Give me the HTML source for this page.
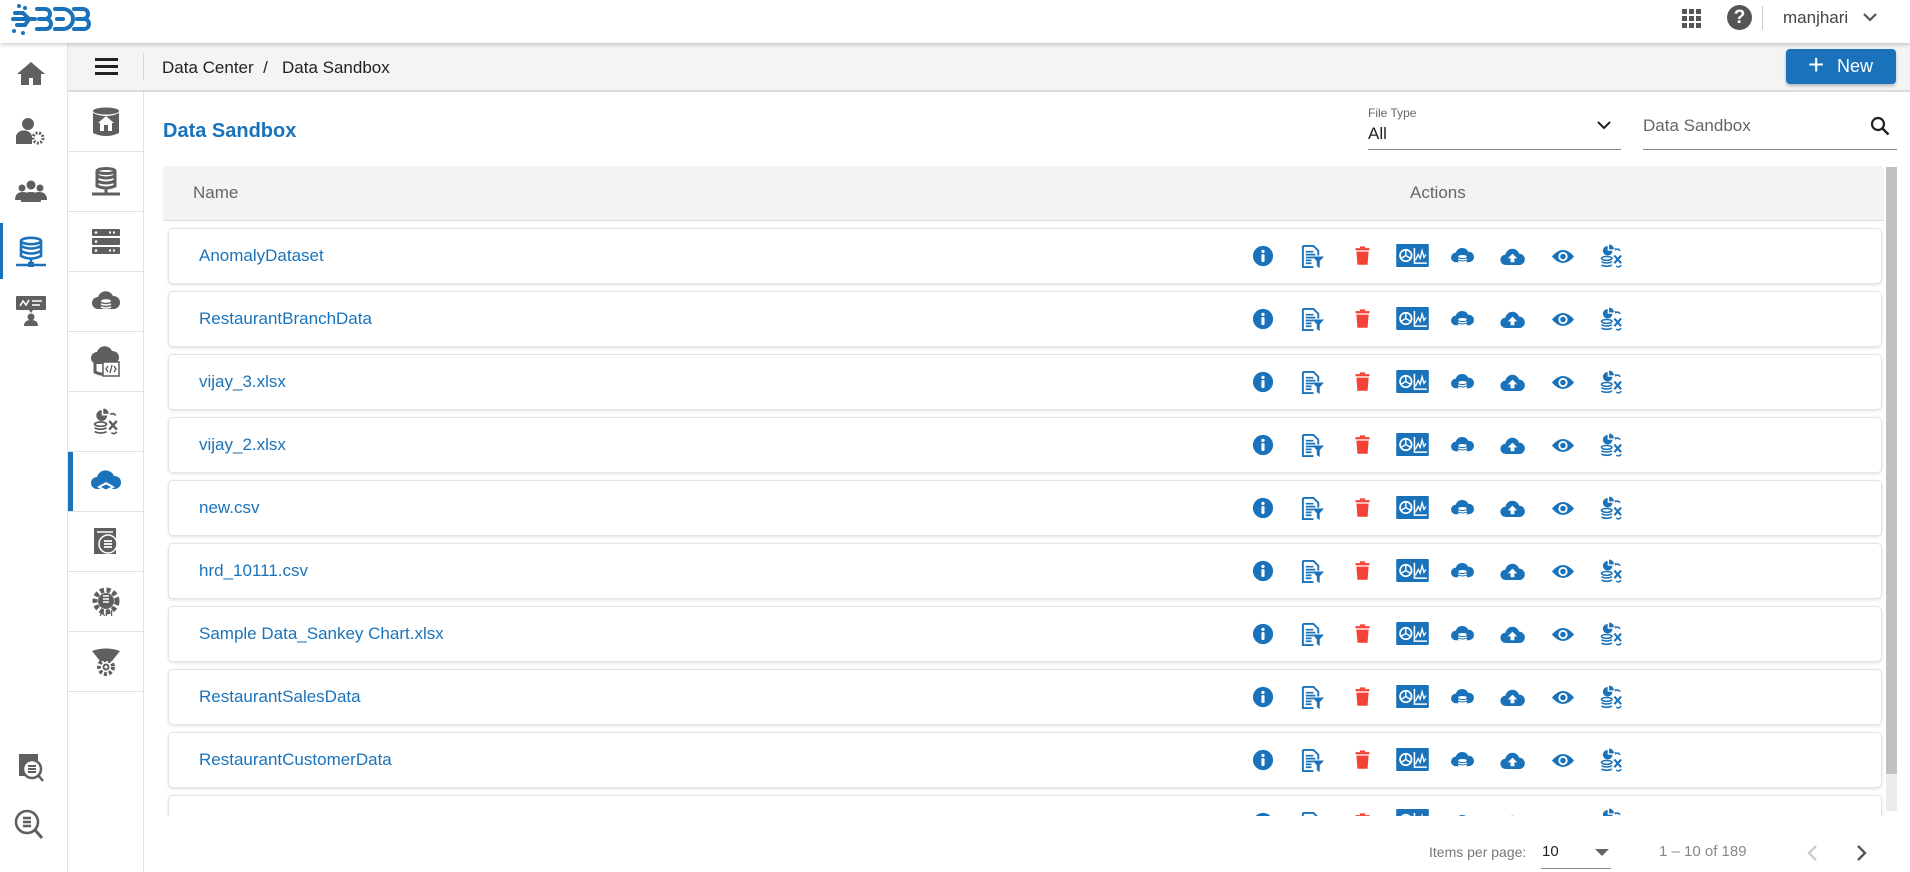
<!DOCTYPE html>
<html><head><meta charset="utf-8">
<style>
*{box-sizing:border-box;margin:0;padding:0}
body{width:1910px;height:872px;overflow:hidden;background:#fff;font-family:"Liberation Sans",sans-serif;position:relative;color:#222}
.abs{position:absolute}
#hdr{left:0;top:0;width:1910px;height:43px;background:#fff;box-shadow:0 2px 4px rgba(0,0,0,.18);z-index:5}
#rail{left:0;top:43px;width:68px;height:829px;background:#fff;border-right:1px solid #e2e2e2}
#bc{left:68px;top:43px;width:1842px;height:49px;background:#f4f4f4;border-bottom:2px solid #dcdcdc}
#rail2{left:68px;top:92px;width:76px;height:780px;background:#fff;border-right:1px solid #e2e2e2}
.r2{position:absolute;left:0;width:75px;height:60px;border-bottom:1px solid #e2e2e2;display:flex;align-items:center;justify-content:center}
.row{position:absolute;left:168px;width:1714px;height:56px;background:#fff;border:1px solid #e4e4e4;border-radius:5px;box-shadow:0 1px 3px rgba(0,0,0,.12)}
.row .t{position:absolute;left:30px;top:17px;font-size:17px;color:#1a73ba}
.ia{position:absolute}
</style></head><body>
<svg width="0" height="0" style="position:absolute">
<defs>
<symbol id="info" viewBox="0 0 24 24"><circle cx="12" cy="12" r="11" fill="#1a73ba"/><circle cx="12" cy="7" r="1.8" fill="#fff"/><rect x="10.3" y="10" width="3.4" height="8.5" rx="1" fill="#fff"/></symbol>
<symbol id="doc" viewBox="0 0 26 26"><path d="M3 2h11l5 5v5" fill="none" stroke="#1a73ba" stroke-width="2"/><path d="M3 2v22h11" fill="none" stroke="#1a73ba" stroke-width="2"/><path d="M6 8h8M6 11h10M6 14h8M6 17h6M6 20h6" stroke="#1a73ba" stroke-width="1.8"/><path d="M13 13h12l-4.5 5v7l-3-2v-5z" fill="#1a73ba"/></symbol>
<symbol id="trash" viewBox="0 0 24 24"><rect x="4" y="3" width="16" height="2.5" fill="#f44336"/><rect x="9" y="1" width="6" height="2" fill="#f44336"/><path d="M5 7h14l-1.2 15H6.2z" fill="#f44336"/></symbol>
<symbol id="chart" viewBox="0 0 34 24"><rect width="34" height="24" rx="1" fill="#1a73ba"/><circle cx="10" cy="12" r="6" fill="none" stroke="#fff" stroke-width="1.8"/><path d="M10 6v6l5 3M10 12l-5 3" stroke="#fff" stroke-width="1.5" fill="none"/><path d="M19 4v16h13" stroke="#fff" stroke-width="1.6" fill="none"/><path d="M20 17l3-6 2 4 2-8 2 7 2-3" stroke="#fff" stroke-width="1.4" fill="none"/></symbol>
<symbol id="cdb" viewBox="0 0 26 22"><path d="M6 17a5 5 0 0 1 0-10 7 7 0 0 1 13-1 5.5 5.5 0 0 1 1 11z" fill="#1a73ba"/><ellipse cx="13" cy="11" rx="4.5" ry="1.6" fill="#fff"/><path d="M8.5 13.5q4.5 2 9 0M8.5 16q4.5 2 9 0M8.5 18.5q4.5 2 9 0" stroke="#fff" stroke-width="1.4" fill="none"/></symbol>
<symbol id="up" viewBox="0 0 26 20"><path d="M6 19a5.5 5.5 0 0 1-.5-11 7.5 7.5 0 0 1 14.5-1 6 6 0 0 1 0 12z" fill="#1a73ba"/><path d="M13 7l-5 5h3v4h4v-4h3z" fill="#fff"/></symbol>
<symbol id="eye" viewBox="0 0 26 18"><path d="M1 9Q13-5 25 9 13 23 1 9z" fill="#1a73ba"/><circle cx="13" cy="9" r="5" fill="#fff"/><circle cx="13" cy="9" r="3" fill="#1a73ba"/></symbol>
<symbol id="pie" viewBox="0 0 24 26"><path d="M8 2a5 5 0 1 0 5 5H8z" fill="#1a73ba"/><path d="M9.5 0.5v5h5a5 5 0 0 0-5-5z" fill="#1a73ba"/><ellipse cx="7" cy="15" rx="5.5" ry="2" fill="none" stroke="#1a73ba" stroke-width="1.6"/><path d="M1.5 18.5q5.5 2.5 11 0M1.5 22q5.5 2.5 11 0" stroke="#1a73ba" stroke-width="1.6" fill="none"/><path d="M15 12l7 8M22 12l-7 8" stroke="#1a73ba" stroke-width="2.2"/><path d="M16 6q3-2 5 1M17 23q3 2 5-1" stroke="#1a73ba" stroke-width="1.6" fill="none"/><path d="M15 4l1 3 2-2z" fill="#1a73ba"/></symbol>
</defs></svg>

<div id="hdr" class="abs">
<svg class="abs" style="left:11px;top:3px" width="84" height="33" viewBox="0 0 84 33"><g fill="none" stroke="#1a73ba" stroke-width="4" stroke-linecap="round"><path d="M26 6h8a5 5 0 0 1 0 10h-6M28 16h7a5 5 0 0 1 0 10h-9"/><path d="M44 6h8a10 10 0 0 1 0 20h-8M46 16h6"/><path d="M63 6h9a5 5 0 0 1 0 10h-6M66 16h7a5 5 0 0 1 0 10h-10"/><path d="M4 10h8l6 6h6M2 16h16M6 22h8l4-6"/></g><g fill="#1a73ba"><circle cx="8" cy="3" r="2"/><circle cx="14" cy="5" r="2"/><circle cx="3" cy="28" r="2"/><circle cx="12" cy="30" r="2"/></g></svg>
<svg class="abs" style="left:1682px;top:9px" width="20" height="20"><g fill="#555"><rect x="0" y="0" width="5" height="5"/><rect x="7" y="0" width="5" height="5"/><rect x="14" y="0" width="5" height="5"/><rect x="0" y="7" width="5" height="5"/><rect x="7" y="7" width="5" height="5"/><rect x="14" y="7" width="5" height="5"/><rect x="0" y="14" width="5" height="5"/><rect x="7" y="14" width="5" height="5"/><rect x="14" y="14" width="5" height="5"/></g></svg>
<div class="abs" style="left:1727px;top:5px;width:25px;height:25px;border-radius:50%;background:#555;color:#fff;font-weight:bold;font-size:19px;text-align:center;line-height:25px">?</div>
<div class="abs" style="left:1762px;top:6px;width:1px;height:24px;background:#ccc"></div>
<div class="abs" style="left:1783px;top:8px;font-size:17px;color:#444">manjhari</div>
<svg class="abs" style="left:1862px;top:12px" width="16" height="10"><path d="M2 2l6 6 6-6" stroke="#555" stroke-width="2.2" fill="none"/></svg>
</div>

<div id="rail" class="abs">
<svg class="abs" style="left:16px;top:17px" width="30" height="26" viewBox="0 0 30 26"><path d="M15 2L1 14h4v11h8v-7h4v7h8V14h4z" fill="#5f5f5f"/></svg>
<svg class="abs" style="left:16px;top:74px" width="30" height="28" viewBox="0 0 30 28"><circle cx="12" cy="7" r="6" fill="#5f5f5f"/><path d="M0 27v-5a8 7 0 0 1 16-3v8z" fill="#5f5f5f"/><circle cx="22" cy="21" r="5" fill="none" stroke="#5f5f5f" stroke-width="3" stroke-dasharray="2 1.5"/></svg>
<svg class="abs" style="left:15px;top:137px" width="32" height="22" viewBox="0 0 32 22"><circle cx="16" cy="5" r="4.5" fill="#5f5f5f"/><circle cx="7" cy="8" r="3.5" fill="#5f5f5f"/><circle cx="25" cy="8" r="3.5" fill="#5f5f5f"/><path d="M0 20q0-8 8-8 8 0 8 8zM16 20q0-8 8-8 8 0 8 8zM6 22q0-10 10-10t10 10z" fill="#5f5f5f"/></svg>
<div class="abs" style="left:0;top:180px;width:3px;height:56px;background:#1a73ba"></div>
<svg class="abs" style="left:15px;top:193px" width="32" height="32" viewBox="0 0 32 32"><g fill="none" stroke="#1a73ba" stroke-width="2.6"><ellipse cx="16" cy="5" rx="10" ry="3.2"/><path d="M6 5v15q10 5 20 0V5M6 10q10 5 20 0M6 15q10 5 20 0"/><path d="M16 22v6M1 29h30"/></g><rect x="13" y="26" width="6" height="5" fill="#1a73ba"/></svg>
<svg class="abs" style="left:16px;top:253px" width="30" height="30" viewBox="0 0 30 30"><rect x="0" y="0" width="30" height="14" rx="1" fill="#5f5f5f"/><path d="M4 10l3-5 3 4 3-5M16 5h10M16 9h8" stroke="#fff" stroke-width="1.5" fill="none"/><path d="M13 14l2 3 2-3z" fill="#5f5f5f"/><circle cx="15" cy="21" r="3.5" fill="#5f5f5f"/><path d="M8 30q0-6 7-6t7 6z" fill="#5f5f5f"/></svg>
<svg class="abs" style="left:16px;top:710px" width="28" height="30" viewBox="0 0 28 30"><rect x="3" y="1" width="19" height="22" fill="#5f5f5f"/><circle cx="16" cy="16" r="9" fill="#fff" stroke="#5f5f5f" stroke-width="2.5"/><path d="M12 13h8M12 16h8M12 19h8" stroke="#5f5f5f" stroke-width="2"/><path d="M22 22l5 6" stroke="#5f5f5f" stroke-width="2.5"/></svg>
<svg class="abs" style="left:14px;top:766px" width="30" height="32" viewBox="0 0 30 32"><circle cx="13" cy="13" r="11" fill="none" stroke="#5f5f5f" stroke-width="2.6"/><path d="M9 9h8M9 13h8M9 17h8" stroke="#5f5f5f" stroke-width="2.4"/><path d="M21 21l7 8" stroke="#5f5f5f" stroke-width="3"/></svg>
</div>

<div id="bc" class="abs">
<div class="abs" style="left:27px;top:15px;width:23px;height:3px;background:#222"></div>
<div class="abs" style="left:27px;top:22px;width:23px;height:3px;background:#222"></div>
<div class="abs" style="left:27px;top:29px;width:23px;height:3px;background:#222"></div>
<div class="abs" style="left:75px;top:10px;width:1px;height:27px;background:#d6d6d6"></div>
<div class="abs" style="left:94px;top:15px;font-size:17px;color:#222">Data Center &nbsp;/ &nbsp; Data Sandbox</div>
<div class="abs" style="left:1718px;top:6px;width:110px;height:35px;background:#1a73ba;border-radius:4px;box-shadow:0 2px 3px rgba(0,0,0,.25);color:#fff;font-size:18px;line-height:35px"><span style="position:absolute;left:22px;top:-2px;font-size:28px;font-weight:300">+</span><span style="position:absolute;left:51px">New</span></div>
</div>

<div id="rail2" class="abs">
<div class="r2" style="top:0"><svg width="30" height="30" viewBox="0 0 30 30"><ellipse cx="15" cy="4" rx="13" ry="3.5" fill="#5f5f5f"/><path d="M2 6v20q13 6 26 0V6q-13 6-26 0z" fill="#5f5f5f"/><path d="M15 9l-8 7h2v8h12v-8h2z" fill="#fff"/><rect x="13" y="18" width="4" height="6" fill="#5f5f5f"/></svg></div>
<div class="r2" style="top:60px"><svg width="30" height="30" viewBox="0 0 30 30"><g fill="none" stroke="#5f5f5f" stroke-width="3"><ellipse cx="15" cy="4" rx="9" ry="2.5"/><path d="M6 4v15q9 4 18 0V4M6 9q9 4 18 0M6 14q9 4 18 0"/><path d="M15 21v5M1 27h28"/></g></svg></div>
<div class="r2" style="top:120px"><svg width="30" height="26" viewBox="0 0 30 26"><rect x="1" y="0" width="28" height="7" rx="1" fill="#5f5f5f"/><rect x="1" y="9" width="28" height="7" rx="1" fill="#5f5f5f"/><rect x="1" y="18" width="28" height="7" rx="1" fill="#5f5f5f"/><g fill="#fff"><circle cx="5" cy="3.5" r="1.3"/><circle cx="5" cy="12.5" r="1.3"/><circle cx="5" cy="21.5" r="1.3"/><rect x="18" y="2.5" width="2" height="2"/><rect x="22" y="2.5" width="2" height="2"/><rect x="18" y="20.5" width="2" height="2"/><rect x="22" y="20.5" width="2" height="2"/></g></svg></div>
<div class="r2" style="top:180px"><svg width="30" height="26" viewBox="0 0 30 26"><path d="M7 20a6 6 0 0 1 0-12 8 8 0 0 1 15-1 6 6 0 0 1 1 13z" fill="#5f5f5f"/><ellipse cx="15" cy="12" rx="5" ry="1.8" fill="#fff"/><path d="M10 15q5 2 10 0M10 18q5 2 10 0" stroke="#fff" stroke-width="1.5" fill="none"/></svg></div>
<div class="r2" style="top:240px"><svg width="30" height="32" viewBox="0 0 30 32"><path d="M6 18a6 6 0 0 1 0-12 8 8 0 0 1 15-1 6 6 0 0 1 1 13z" fill="#5f5f5f"/><path d="M4 14v12q8 4 14 1" stroke="#5f5f5f" stroke-width="3" fill="none"/><rect x="12" y="16" width="16" height="14" fill="#fff" stroke="#5f5f5f" stroke-width="1.5"/><path d="M17 20l-2 3 2 3M23 20l2 3-2 3M21 19l-2 8" stroke="#5f5f5f" stroke-width="1.4" fill="none"/></svg></div>
<div class="r2" style="top:300px"><svg width="28" height="28" viewBox="0 0 24 26"><path d="M8 2a5 5 0 1 0 5 5H8z" fill="#5f5f5f"/><path d="M9.5 0.5v5h5a5 5 0 0 0-5-5z" fill="#5f5f5f"/><ellipse cx="7" cy="15" rx="5.5" ry="2" fill="none" stroke="#5f5f5f" stroke-width="1.6"/><path d="M1.5 18.5q5.5 2.5 11 0M1.5 22q5.5 2.5 11 0" stroke="#5f5f5f" stroke-width="1.6" fill="none"/><path d="M15 12l7 8M22 12l-7 8" stroke="#5f5f5f" stroke-width="2.2"/><path d="M16 6q3-2 5 1M17 23q3 2 5-1" stroke="#5f5f5f" stroke-width="1.6" fill="none"/></svg></div>
<div class="r2" style="top:360px"><div style="position:absolute;left:0;top:0;width:5px;height:59px;background:#1a73ba"></div><svg width="32" height="26" viewBox="0 0 32 26"><path d="M7 20a6 6 0 0 1 0-12 9 9 0 0 1 17-1 6.5 6.5 0 0 1 1 13z" fill="#1a73ba"/><path d="M16 13l-9 5 9 5 9-5z" fill="#fff"/><path d="M16 15.5l-5 2.5 5 2.5 5-2.5z" fill="#1a73ba"/></svg></div>
<div class="r2" style="top:420px"><svg width="30" height="30" viewBox="0 0 30 30"><rect x="3" y="1" width="22" height="26" fill="#5f5f5f"/><path d="M6 5h16" stroke="#fff" stroke-width="1.5"/><circle cx="17" cy="17" r="9" fill="#5f5f5f" stroke="#fff" stroke-width="1.5"/><path d="M13 14h8M13 17h8M13 20h8" stroke="#fff" stroke-width="1.8"/></svg></div>
<div class="r2" style="top:480px"><svg width="30" height="30" viewBox="0 0 30 30"><circle cx="15" cy="14" r="11" fill="none" stroke="#5f5f5f" stroke-width="5" stroke-dasharray="4 2.5"/><circle cx="15" cy="14" r="8" fill="#5f5f5f"/><path d="M12 9h6M12 12h6M12 15h6" stroke="#fff" stroke-width="1.5"/><text x="15" y="29" font-size="8" font-weight="bold" text-anchor="middle" fill="#5f5f5f" font-family="Liberation Sans">API</text></svg></div>
<div class="r2" style="top:540px"><svg width="30" height="30" viewBox="0 0 30 30"><path d="M1 4q14-5 28 0l-8 10H9z" fill="#5f5f5f"/><circle cx="15" cy="20" r="7" fill="none" stroke="#5f5f5f" stroke-width="4" stroke-dasharray="3 2"/><circle cx="15" cy="20" r="2.5" fill="#fff" stroke="#5f5f5f" stroke-width="2"/></svg></div>
</div>

<div class="abs" style="left:163px;top:120px;font-size:20px;font-weight:bold;color:#1a73ba">Data Sandbox</div>
<div class="abs" style="left:1368px;top:106px;font-size:12px;color:#666">File Type</div>
<div class="abs" style="left:1368px;top:124px;font-size:17px;color:#222">All</div>
<svg class="abs" style="left:1597px;top:121px" width="14" height="9"><path d="M1 1l6 6 6-6" stroke="#222" stroke-width="2" fill="none"/></svg>
<div class="abs" style="left:1368px;top:149px;width:253px;height:1px;background:#888"></div>
<div class="abs" style="left:1643px;top:116px;font-size:17px;color:#666">Data Sandbox</div>
<svg class="abs" style="left:1870px;top:116px" width="20" height="20"><circle cx="8" cy="8" r="6" stroke="#222" stroke-width="2.2" fill="none"/><path d="M12.5 12.5l6 6" stroke="#222" stroke-width="2.4"/></svg>
<div class="abs" style="left:1643px;top:149px;width:254px;height:1px;background:#888"></div>

<div class="abs" style="left:163px;top:166px;width:1721px;height:55px;background:#f3f3f3;border-radius:4px 4px 0 0;border-bottom:1px solid #ddd"><span style="position:absolute;left:30px;top:17px;font-size:17px;color:#666">Name</span><span style="position:absolute;left:1247px;top:17px;font-size:17px;color:#666">Actions</span></div>
<div class="abs" style="left:1886px;top:167px;width:11px;height:644px;background:#ececec"></div>
<div class="abs" style="left:1886px;top:167px;width:11px;height:607px;background:#c1c1c1"></div>

<div class="abs" style="left:0;top:222px;width:1884px;height:594px;overflow:hidden">
<div style="position:absolute;left:0;top:-222px;width:1884px;height:1100px">
<div class="row" style="top:228px"><span class="t">AnomalyDataset</span></div>
<div class="row" style="top:291px"><span class="t">RestaurantBranchData</span></div>
<div class="row" style="top:354px"><span class="t">vijay_3.xlsx</span></div>
<div class="row" style="top:417px"><span class="t">vijay_2.xlsx</span></div>
<div class="row" style="top:480px"><span class="t">new.csv</span></div>
<div class="row" style="top:543px"><span class="t">hrd_10111.csv</span></div>
<div class="row" style="top:606px"><span class="t">Sample Data_Sankey Chart.xlsx</span></div>
<div class="row" style="top:669px"><span class="t">RestaurantSalesData</span></div>
<div class="row" style="top:732px"><span class="t">RestaurantCustomerData</span></div>
<div class="row" style="top:795px"><span class="t">RestaurantInventoryData</span></div>

<svg class="ia" style="left:1252px;top:245px" width="22" height="22"><use href="#info"/></svg><svg class="ia" style="left:1300px;top:244px" width="25" height="25"><use href="#doc"/></svg><svg class="ia" style="left:1352px;top:245px" width="21" height="22"><use href="#trash"/></svg><svg class="ia" style="left:1396px;top:244px" width="33" height="23"><use href="#chart"/></svg><svg class="ia" style="left:1450px;top:246px" width="25" height="21"><use href="#cdb"/></svg><svg class="ia" style="left:1500px;top:247px" width="25" height="19"><use href="#up"/></svg><svg class="ia" style="left:1551px;top:248px" width="24" height="17"><use href="#eye"/></svg><svg class="ia" style="left:1600px;top:244px" width="23" height="25"><use href="#pie"/></svg>
<svg class="ia" style="left:1252px;top:308px" width="22" height="22"><use href="#info"/></svg><svg class="ia" style="left:1300px;top:307px" width="25" height="25"><use href="#doc"/></svg><svg class="ia" style="left:1352px;top:308px" width="21" height="22"><use href="#trash"/></svg><svg class="ia" style="left:1396px;top:307px" width="33" height="23"><use href="#chart"/></svg><svg class="ia" style="left:1450px;top:309px" width="25" height="21"><use href="#cdb"/></svg><svg class="ia" style="left:1500px;top:310px" width="25" height="19"><use href="#up"/></svg><svg class="ia" style="left:1551px;top:311px" width="24" height="17"><use href="#eye"/></svg><svg class="ia" style="left:1600px;top:307px" width="23" height="25"><use href="#pie"/></svg>
<svg class="ia" style="left:1252px;top:371px" width="22" height="22"><use href="#info"/></svg><svg class="ia" style="left:1300px;top:370px" width="25" height="25"><use href="#doc"/></svg><svg class="ia" style="left:1352px;top:371px" width="21" height="22"><use href="#trash"/></svg><svg class="ia" style="left:1396px;top:370px" width="33" height="23"><use href="#chart"/></svg><svg class="ia" style="left:1450px;top:372px" width="25" height="21"><use href="#cdb"/></svg><svg class="ia" style="left:1500px;top:373px" width="25" height="19"><use href="#up"/></svg><svg class="ia" style="left:1551px;top:374px" width="24" height="17"><use href="#eye"/></svg><svg class="ia" style="left:1600px;top:370px" width="23" height="25"><use href="#pie"/></svg>
<svg class="ia" style="left:1252px;top:434px" width="22" height="22"><use href="#info"/></svg><svg class="ia" style="left:1300px;top:433px" width="25" height="25"><use href="#doc"/></svg><svg class="ia" style="left:1352px;top:434px" width="21" height="22"><use href="#trash"/></svg><svg class="ia" style="left:1396px;top:433px" width="33" height="23"><use href="#chart"/></svg><svg class="ia" style="left:1450px;top:435px" width="25" height="21"><use href="#cdb"/></svg><svg class="ia" style="left:1500px;top:436px" width="25" height="19"><use href="#up"/></svg><svg class="ia" style="left:1551px;top:437px" width="24" height="17"><use href="#eye"/></svg><svg class="ia" style="left:1600px;top:433px" width="23" height="25"><use href="#pie"/></svg>
<svg class="ia" style="left:1252px;top:497px" width="22" height="22"><use href="#info"/></svg><svg class="ia" style="left:1300px;top:496px" width="25" height="25"><use href="#doc"/></svg><svg class="ia" style="left:1352px;top:497px" width="21" height="22"><use href="#trash"/></svg><svg class="ia" style="left:1396px;top:496px" width="33" height="23"><use href="#chart"/></svg><svg class="ia" style="left:1450px;top:498px" width="25" height="21"><use href="#cdb"/></svg><svg class="ia" style="left:1500px;top:499px" width="25" height="19"><use href="#up"/></svg><svg class="ia" style="left:1551px;top:500px" width="24" height="17"><use href="#eye"/></svg><svg class="ia" style="left:1600px;top:496px" width="23" height="25"><use href="#pie"/></svg>
<svg class="ia" style="left:1252px;top:560px" width="22" height="22"><use href="#info"/></svg><svg class="ia" style="left:1300px;top:559px" width="25" height="25"><use href="#doc"/></svg><svg class="ia" style="left:1352px;top:560px" width="21" height="22"><use href="#trash"/></svg><svg class="ia" style="left:1396px;top:559px" width="33" height="23"><use href="#chart"/></svg><svg class="ia" style="left:1450px;top:561px" width="25" height="21"><use href="#cdb"/></svg><svg class="ia" style="left:1500px;top:562px" width="25" height="19"><use href="#up"/></svg><svg class="ia" style="left:1551px;top:563px" width="24" height="17"><use href="#eye"/></svg><svg class="ia" style="left:1600px;top:559px" width="23" height="25"><use href="#pie"/></svg>
<svg class="ia" style="left:1252px;top:623px" width="22" height="22"><use href="#info"/></svg><svg class="ia" style="left:1300px;top:622px" width="25" height="25"><use href="#doc"/></svg><svg class="ia" style="left:1352px;top:623px" width="21" height="22"><use href="#trash"/></svg><svg class="ia" style="left:1396px;top:622px" width="33" height="23"><use href="#chart"/></svg><svg class="ia" style="left:1450px;top:624px" width="25" height="21"><use href="#cdb"/></svg><svg class="ia" style="left:1500px;top:625px" width="25" height="19"><use href="#up"/></svg><svg class="ia" style="left:1551px;top:626px" width="24" height="17"><use href="#eye"/></svg><svg class="ia" style="left:1600px;top:622px" width="23" height="25"><use href="#pie"/></svg>
<svg class="ia" style="left:1252px;top:686px" width="22" height="22"><use href="#info"/></svg><svg class="ia" style="left:1300px;top:685px" width="25" height="25"><use href="#doc"/></svg><svg class="ia" style="left:1352px;top:686px" width="21" height="22"><use href="#trash"/></svg><svg class="ia" style="left:1396px;top:685px" width="33" height="23"><use href="#chart"/></svg><svg class="ia" style="left:1450px;top:687px" width="25" height="21"><use href="#cdb"/></svg><svg class="ia" style="left:1500px;top:688px" width="25" height="19"><use href="#up"/></svg><svg class="ia" style="left:1551px;top:689px" width="24" height="17"><use href="#eye"/></svg><svg class="ia" style="left:1600px;top:685px" width="23" height="25"><use href="#pie"/></svg>
<svg class="ia" style="left:1252px;top:749px" width="22" height="22"><use href="#info"/></svg><svg class="ia" style="left:1300px;top:748px" width="25" height="25"><use href="#doc"/></svg><svg class="ia" style="left:1352px;top:749px" width="21" height="22"><use href="#trash"/></svg><svg class="ia" style="left:1396px;top:748px" width="33" height="23"><use href="#chart"/></svg><svg class="ia" style="left:1450px;top:750px" width="25" height="21"><use href="#cdb"/></svg><svg class="ia" style="left:1500px;top:751px" width="25" height="19"><use href="#up"/></svg><svg class="ia" style="left:1551px;top:752px" width="24" height="17"><use href="#eye"/></svg><svg class="ia" style="left:1600px;top:748px" width="23" height="25"><use href="#pie"/></svg>
<svg class="ia" style="left:1252px;top:812px" width="22" height="22"><use href="#info"/></svg><svg class="ia" style="left:1300px;top:811px" width="25" height="25"><use href="#doc"/></svg><svg class="ia" style="left:1352px;top:812px" width="21" height="22"><use href="#trash"/></svg><svg class="ia" style="left:1396px;top:809px" width="33" height="23"><use href="#chart"/></svg><svg class="ia" style="left:1450px;top:813px" width="25" height="21"><use href="#cdb"/></svg><svg class="ia" style="left:1500px;top:814px" width="25" height="19"><use href="#up"/></svg><svg class="ia" style="left:1551px;top:815px" width="24" height="17"><use href="#eye"/></svg><svg class="ia" style="left:1600px;top:808px" width="23" height="25"><use href="#pie"/></svg>
</div></div>

<div class="abs" style="left:1429px;top:844px;font-size:14px;color:#777">Items per page:</div>
<div class="abs" style="left:1542px;top:843px;font-size:15px;color:#222">10</div>
<svg class="abs" style="left:1595px;top:849px" width="14" height="8"><path d="M0 0h14l-7 7z" fill="#666"/></svg>
<div class="abs" style="left:1541px;top:868px;width:70px;height:1px;background:#888"></div>
<div class="abs" style="left:1659px;top:843px;font-size:15px;color:#888">1 – 10 of 189</div>
<svg class="abs" style="left:1806px;top:844px" width="12" height="18"><path d="M10 2L3 9l7 7" stroke="#ccc" stroke-width="2.4" fill="none"/></svg>
<svg class="abs" style="left:1856px;top:844px" width="12" height="18"><path d="M2 2l7 7-7 7" stroke="#555" stroke-width="2.4" fill="none"/></svg>
</body></html>
